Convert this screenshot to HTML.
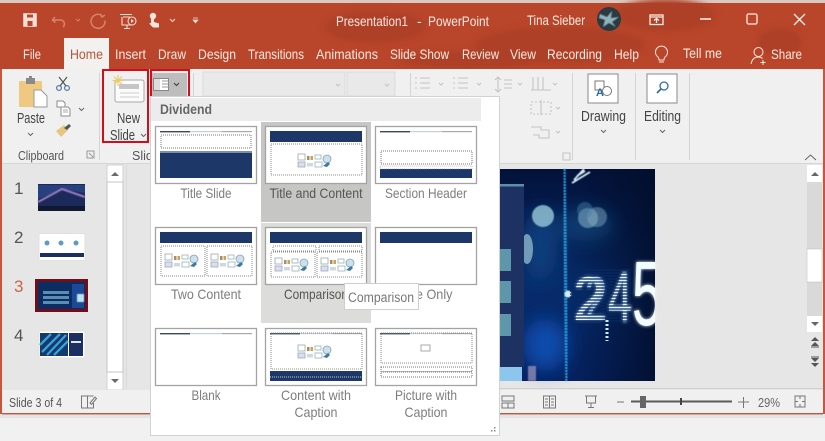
<!DOCTYPE html>
<html><head><meta charset="utf-8"><title>PowerPoint</title>
<style>
html,body{margin:0;padding:0;width:825px;height:441px;overflow:hidden;background:#f1f1f1}
svg.root{display:block;position:absolute;left:0;top:0;filter:blur(.3px)}
text{font-family:"Liberation Sans",sans-serif}
.t{fill:#fbe9e3;font-size:14px}
.r{fill:#444;font-size:14.5px}
.g{fill:#7d7d7d;font-size:14px;text-anchor:middle}
</style></head><body>
<svg class="root" width="825" height="441" viewBox="0 0 825 441" xmlns="http://www.w3.org/2000/svg">
<defs>
<filter id="b1"><feGaussianBlur stdDeviation="0.5"/></filter>
<filter id="b3" x="-30%" y="-60%" width="160%" height="220%"><feGaussianBlur stdDeviation="3"/></filter>
<filter id="b8" x="-80%" y="-80%" width="260%" height="260%"><feGaussianBlur stdDeviation="9"/></filter>
<filter id="gl" x="-30%" y="-30%" width="160%" height="160%"><feGaussianBlur stdDeviation="1.6" result="x"/><feMerge><feMergeNode in="x"/><feMergeNode in="SourceGraphic"/></feMerge></filter>
<linearGradient id="bg" x1="0" x2="0" y1="0" y2="1"><stop offset="0" stop-color="#03123a"/><stop offset=".55" stop-color="#062c6c"/><stop offset="1" stop-color="#052160"/></linearGradient>
<linearGradient id="rg" x1="0" x2="1" y1="0" y2="0"><stop offset="0" stop-color="#02102f" stop-opacity="0"/><stop offset="1" stop-color="#020d2a" stop-opacity=".85"/></linearGradient>
<symbol id="ci" viewBox="0 0 37 16" overflow="visible">
<rect x="0" y="1" width="7" height="6" fill="#fff" stroke="#9aa" stroke-width=".8"/>
<rect x="0" y="9" width="7" height="5" fill="#dde" stroke="#9ab" stroke-width=".8"/>
<rect x="9" y="3" width="2.5" height="4" fill="#a98d62"/><rect x="12.5" y="3" width="2.5" height="4" fill="#c9a15f"/>
<rect x="9" y="10" width="6" height="3.5" fill="#cfd8de"/>
<rect x="17" y="2" width="6" height="4" fill="#fff" stroke="#8aa" stroke-width=".7"/>
<rect x="17" y="9" width="7" height="5" fill="#fff" stroke="#8aa" stroke-width=".7"/>
<circle cx="29" cy="6" r="4" fill="#cfe0ea" stroke="#7fa3b8" stroke-width=".8"/>
<path d="M25 13 L30 9 L32 11 L29 14z" fill="#3b79a6"/>
</symbol>
<symbol id="top" viewBox="0 0 102 58" overflow="visible">
<rect x=".5" y=".5" width="101" height="57" fill="#fff" stroke="#a3a3a3" stroke-width="1.3"/>
<rect x="5" y="5" width="30" height="1.4" fill="#3c4a60"/>
<rect x="35" y="5" width="32" height="1.2" fill="#c5d0da"/>
<rect x="67" y="5" width="30" height="1.2" fill="#a9a9a9"/>
</symbol>
</defs>

<!-- title band -->
<rect x="0" y="0" width="825" height="3" fill="#d9c9c0"/>
<rect x="0" y="3" width="825" height="66" fill="#b9452a"/>
<g fill="#ad3f27" filter="url(#b3)">
<ellipse cx="375" cy="27" rx="50" ry="16"/>
<ellipse cx="560" cy="45" rx="85" ry="18"/>
<ellipse cx="665" cy="15" rx="50" ry="16"/>
<ellipse cx="780" cy="42" rx="22" ry="14"/>
<ellipse cx="470" cy="60" rx="70" ry="9"/>
</g>
<!-- qat -->
<g fill="none" stroke="#fbe9e3" stroke-width="1.5">
<rect x="24" y="14" width="12" height="12" fill="#f6dcd3"/>
<rect x="27" y="14.5" width="6" height="3" fill="#b9452a" stroke="none"/>
<rect x="27.5" y="21" width="5" height="5" fill="#b9452a" stroke="none"/>
</g>
<g fill="none" stroke="#d5826c" stroke-width="1.6">
<path d="M55 17 l-2.5 3 l3 2.5 M53 20 h8 a4 4 0 0 1 2 7"/>
<path d="M102 15.5 a7 7 0 1 0 3 5 M100 14 l2 3 l3 -2"/>
<path d="M76 19 l2 2 l2 -2" stroke-width="1"/>
</g>
<g fill="none" stroke="#f7dcd2" stroke-width="1.1">
<path d="M120 14.5 h12 M123 17 h7 M122 17 v8 h10 M127 25 v3 M124 28.5 h6"/>
<circle cx="132" cy="21" r="4" fill="#b9452a"/>
<path d="M131 19 l3 2 l-3 2z" fill="#f7dcd2" stroke="none"/>
</g>
<g fill="#f7e4dd">
<circle cx="153" cy="16" r="3.2"/>
<path d="M151 18 h3 v4 l5 1.5 v4 h-6 l-4 -4 l2 -0.5z"/>
</g>
<path d="M170 19 l2.5 2.5 l2.5 -2.5" fill="none" stroke="#f7dcd2" stroke-width="1.1"/>
<path d="M193 18 h5 M193 20 h5 l-2.5 3z" fill="#f7dcd2" stroke="#f7dcd2" stroke-width=".7"/>

<text class="t" x="336" y="26" textLength="72" lengthAdjust="spacingAndGlyphs">Presentation1</text>
<text class="t" x="417" y="26">-</text>
<text class="t" x="428" y="26" textLength="61" lengthAdjust="spacingAndGlyphs">PowerPoint</text>
<text class="t" x="527" y="25" textLength="58" lengthAdjust="spacingAndGlyphs">Tina Sieber</text>
<circle cx="609" cy="19" r="12" fill="#2b3a40"/>
<g filter="url(#b1)" fill="#8fb4bd"><path d="M600 14 l7 3 l5 -6 l-1 7 l8 -1 l-7 5 l4 5 l-7 -4 l-6 4 l2 -7 l-6 -2z"/></g>
<g fill="none" stroke="#fbe9e3" stroke-width="1.3">
<rect x="650" y="15" width="13" height="9.5"/>
<path d="M650 17 h13 M656.500 23 v-4 M654 20.500 l2.500 -2 l2.500 2"/>
<path d="M700 19 h11" stroke-width="1.6"/>
<rect x="747" y="14" width="10" height="10" rx="1.500"/>
<path d="M794 14 l11 11 M805 14 l-11 11" stroke-width="1.400"/>
</g>
<!-- tabs -->
<rect x="64" y="38" width="45" height="31" fill="#f2f1f0"/>
<g>
<text class="t" x="23" y="59" textLength="18" lengthAdjust="spacingAndGlyphs">File</text>
<text x="70" y="59" textLength="33" lengthAdjust="spacingAndGlyphs" fill="#b9533a" font-size="14">Home</text>
<text class="t" x="115" y="59" textLength="31" lengthAdjust="spacingAndGlyphs">Insert</text>
<text class="t" x="158" y="59" textLength="28" lengthAdjust="spacingAndGlyphs">Draw</text>
<text class="t" x="198" y="59" textLength="38" lengthAdjust="spacingAndGlyphs">Design</text>
<text class="t" x="248" y="59" textLength="56" lengthAdjust="spacingAndGlyphs">Transitions</text>
<text class="t" x="316" y="59" textLength="62" lengthAdjust="spacingAndGlyphs">Animations</text>
<text class="t" x="390" y="59" textLength="59" lengthAdjust="spacingAndGlyphs">Slide Show</text>
<text class="t" x="462" y="59" textLength="37" lengthAdjust="spacingAndGlyphs">Review</text>
<text class="t" x="510" y="59" textLength="26" lengthAdjust="spacingAndGlyphs">View</text>
<text class="t" x="547" y="59" textLength="55" lengthAdjust="spacingAndGlyphs">Recording</text>
<text class="t" x="614" y="59" textLength="25" lengthAdjust="spacingAndGlyphs">Help</text>
<text class="t" x="683" y="58" textLength="39" lengthAdjust="spacingAndGlyphs">Tell me</text>
<text class="t" x="771" y="59" textLength="31" lengthAdjust="spacingAndGlyphs">Share</text>
</g>
<g fill="none" stroke="#fbe9e3" stroke-width="1">
<path d="M665 57 a6 6 0 1 0 -7 0 c1 1 1 2 1 3 h5 c0 -1 0 -2 1 -3z M659 62 h5"/>
<circle cx="758.500" cy="52" r="4.500"/>
<path d="M751 64 c1 -5 4 -7 7.500 -7 c2 0 3 .5 4 1.500 M763 60 v5 M760.500 62.500 h5"/>
</g>

<!-- ribbon -->
<rect x="0" y="69" width="825" height="94" fill="#f0f0f0"/>
<rect x="0" y="69" width="2" height="345" fill="#c9563c"/>
<rect x="823" y="69" width="2" height="345" fill="#c9563c"/>
<g fill="#d4d4d4">
<rect x="99" y="73" width="1" height="87"/><rect x="193" y="73" width="1" height="24"/>
<rect x="410" y="73" width="1" height="24"/>
<rect x="572" y="73" width="1" height="87"/><rect x="635" y="73" width="1" height="87"/><rect x="689" y="73" width="1" height="87"/>
</g>
<!-- paste -->
<rect x="19" y="81" width="23" height="26" rx="1" fill="#efc981"/>
<rect x="26" y="78" width="9" height="6" fill="#8a8a8a"/><rect x="29" y="76" width="3" height="3" fill="#8a8a8a"/>
<path d="M34 90 h7 l6 6 v11 h-13z" fill="#fff" stroke="#9a9a9a"/>
<g fill="none" stroke="#5b7fa6" stroke-width="1.300"><circle cx="59" cy="88" r="2.400"/><circle cx="67" cy="88" r="2.400"/></g>
<path d="M60 86 L67 77 M66 86 L59 77" stroke="#555" stroke-width="1.200"/>
<path d="M57 101 h6 l2 2 v4 h-8z M61 107 h7 l2 2 v7 h-9z" fill="#fff" stroke="#8d8d8d"/>
<path d="M63 110 h5 M63 112 h5" stroke="#aaa"/>
<path d="M79 108 l2.500 2.500 l2.500 -2.500" fill="none" stroke="#666"/>
<path d="M56 131 l8 -6 l4 5 l-7 7z" fill="#e6c77d"/><path d="M64 128 l5 -4 l2 2 l-4 4z" fill="#555"/>
<text class="r" x="17" y="123" textLength="28" lengthAdjust="spacingAndGlyphs">Paste</text>
<path d="M28 133 l2.500 2.500 l2.500 -2.500" fill="none" stroke="#666"/>
<text x="18" y="160" font-size="12.500" fill="#555" textLength="46" lengthAdjust="spacingAndGlyphs">Clipboard</text>
<path d="M87 151 h7 v7 h-7z M89 153 l4 4" fill="none" stroke="#999"/>
<!-- new slide -->
<rect x="115" y="80" width="29" height="22" rx="2" fill="#fbfbfb" stroke="#a8a8a8"/>
<rect x="119" y="84" width="20" height="5" fill="#c6c6c6"/>
<path d="M120 93 h19 M120 97 h19" stroke="#cdcdcd"/>
<path d="M118 75 v11 M112.500 80.500 h11 M114 76.500 l8 8 M122 76.500 l-8 8" stroke="#efca6c" stroke-width="1.200"/>
<text class="r" x="117" y="123" textLength="23" lengthAdjust="spacingAndGlyphs">New</text>
<text class="r" x="110" y="140" textLength="25" lengthAdjust="spacingAndGlyphs">Slide</text>
<path d="M141 134 l2.500 2.500 l2.500 -2.500" fill="none" stroke="#666"/>
<rect x="103" y="70" width="45" height="72" fill="none" stroke="#d10f1c" stroke-width="2"/>
<text x="132" y="160" font-size="12.500" fill="#555">Slid</text>
<!-- layout button -->
<rect x="152" y="73" width="35" height="23" fill="#bdbdbd"/>
<rect x="153.500" y="78.500" width="15" height="12" fill="#fff" stroke="#888"/>
<rect x="154" y="79" width="6" height="11" fill="#ddd"/><path d="M162 81 h6 M162 84 h6 M162 87 h6" stroke="#999"/>
<path d="M174 83 l2.500 2.500 l2.500 -2.500" fill="none" stroke="#444" stroke-width="1.200"/>
<rect x="151" y="70" width="38" height="29" fill="none" stroke="#d10f1c" stroke-width="2"/>
<!-- disabled combos -->
<rect x="203" y="72" width="142" height="24" fill="#e9e9e9" stroke="#dcdcdc"/>
<rect x="347" y="72" width="48" height="24" fill="#e9e9e9" stroke="#dcdcdc"/>
<g fill="none" stroke="#c4c4c4" stroke-width="1.100">
<path d="M336 84 l2 2 l2 -2 M385 84 l2 2 l2 -2"/>
<path d="M420 78 h10 M420 83 h10 M420 88 h10 M415 78 h2 M415 83 h2 M415 88 h2 M439 83 l2 2 l2 -2"/>
<path d="M458 78 h10 M458 83 h10 M458 88 h10 M453 78 h2 M453 83 h2 M453 88 h2 M477 83 l2 2 l2 -2"/>
<path d="M498 78 v13 M495 80 l3 -3 l3 3 M495 89 l3 3 l3 -3 M504 80 h8 M504 84 h8 M504 88 h8 M518 83 l2 2 l2 -2"/>
<path d="M533 90 v-13 M538 90 v-13 M543 90 v-13 M531 90 h20 M553 83 l2 2 l2 -2"/>
<rect x="531" y="102" width="20" height="12" stroke-dasharray="2 2"/>
<path d="M541 100 v15 M556 107 l2 2 l2 -2"/>
<path d="M531 127 h10 v3 h8 v8 h-10 v-3 h-6 M556 131 l2 2 l2 -2"/>
<path d="M563 153 h7 v7 h-7z"/>
</g>
<!-- drawing / editing -->
<rect x="588" y="74" width="30" height="29" fill="#fff" stroke="#8a8a8a"/>
<rect x="595" y="81" width="9" height="9" fill="none" stroke="#777"/>
<circle cx="607" cy="91" r="4.500" fill="#fff" stroke="#777"/>
<text x="596" y="96" font-size="11" font-weight="bold" fill="#2c6ea5">A</text>
<text class="r" x="581" y="121" textLength="45" lengthAdjust="spacingAndGlyphs">Drawing</text>
<path d="M601 130 l2.500 2.500 l2.500 -2.500" fill="none" stroke="#666"/>
<rect x="647" y="74" width="30" height="29" fill="#fff" stroke="#8a8a8a"/>
<circle cx="664" cy="86" r="4" fill="none" stroke="#2f6f9f" stroke-width="1.300"/>
<path d="M661 89 l-4 4" stroke="#2f6f9f" stroke-width="1.800"/>
<text class="r" x="644" y="121" textLength="37" lengthAdjust="spacingAndGlyphs">Editing</text>
<path d="M660 130 l2.500 2.500 l2.500 -2.500" fill="none" stroke="#666"/>
<path d="M805 160 l5.500 -5 l5.500 5" fill="none" stroke="#666"/>

<!-- work area -->
<rect x="2" y="163" width="821" height="228" fill="#e6e6e6"/>
<rect x="2" y="163" width="821" height="1" fill="#d6d6d6"/>
<rect x="126" y="164" width="1" height="225" fill="#d8d8d8"/>
<!-- thumbnails -->
<g font-size="17" fill="#555">
<text x="14" y="194">1</text><text x="14" y="243">2</text><text x="14" y="292" fill="#c8654a">3</text><text x="14" y="341">4</text>
</g>
<rect x="38" y="184" width="47" height="27" fill="#1b2a5a"/>
<path d="M38 199 L62 189 L85 193 V185 H38z" fill="#27407e"/><path d="M38 202 L62 189 L85 197" stroke="#9a7cc0" fill="none" stroke-width="2" filter="url(#b1)"/>
<rect x="38" y="206" width="47" height="5" fill="#10192f"/>
<rect x="39" y="233.500" width="46" height="27" fill="#fff" stroke="#e0e0e0"/>
<g fill="#5d9dbd"><circle cx="47" cy="243" r="2.500"/><circle cx="61" cy="243" r="2.500"/><circle cx="76" cy="243" r="2.500"/></g>
<rect x="40" y="253" width="44" height="4" fill="#1c2f63"/>
<rect x="35" y="279" width="53" height="33" fill="#6e0f1d"/>
<rect x="38" y="282" width="47" height="27" fill="#0d2c62"/>
<g fill="#5a8eb0"><rect x="43" y="291" width="26" height="3"/><rect x="43" y="296" width="26" height="3"/><rect x="43" y="301" width="26" height="3"/></g>
<rect x="72" y="284" width="12" height="24" fill="#1a4a96"/><rect x="77" y="294" width="7" height="8" fill="#bde3f0" filter="url(#b1)"/>
<rect x="39" y="331" width="46" height="27" fill="#fff" stroke="#e0e0e0"/>
<rect x="40" y="333" width="28" height="23" fill="#123a6a"/>
<path d="M42 352 L60 334 M47 355 L66 335 M54 355 L68 341 M40 345 L51 334" stroke="#3a9fda" stroke-width="2.300"/>
<rect x="69" y="333" width="14" height="23" fill="#1c2f63"/><rect x="71" y="341" width="10" height="2" fill="#dfe6f0"/>
<!-- thumb scrollbar -->
<rect x="107" y="165" width="16" height="225" fill="#fff" stroke="#d0d0d0"/>
<rect x="107" y="182" width="16" height="190" fill="#fff" stroke="#c4c4c4"/>
<path d="M111 176 l4 -4 l4 4z M111 379 l4 4 l4 -4z" fill="#6a6a6a"/>

<!-- slide image -->
<rect x="499" y="169" width="156" height="212" fill="url(#bg)"/>
<rect x="570" y="169" width="85" height="212" fill="url(#rg)"/>
<g filter="url(#b8)">
<ellipse cx="545" cy="345" rx="22" ry="26" fill="#0b50b4" opacity=".9"/>
<ellipse cx="540" cy="245" rx="18" ry="35" fill="#0a4486" opacity=".8"/>
<ellipse cx="585" cy="225" rx="28" ry="16" fill="#164e86" opacity=".6"/>
</g>
<circle cx="543" cy="216" r="11" fill="#8fc0d4" opacity=".85" filter="url(#b1)"/>
<circle cx="588" cy="218" r="10" fill="#8fb5c9" opacity=".55" filter="url(#b1)"/>
<circle cx="597" cy="217" r="10" fill="#86aec4" opacity=".45" filter="url(#b1)"/>
<circle cx="585" cy="210" r="8" fill="#4a7fa6" opacity=".45" filter="url(#b1)"/>
<ellipse cx="527" cy="249" rx="6" ry="15" fill="#9ec7d4" opacity=".7"/>
<path d="M564 169 L567 381" stroke="#2c9fe0" stroke-width="3.500" stroke-dasharray="2 1" filter="url(#b1)"/>
<circle cx="568" cy="294" r="3.500" fill="#cfefff" filter="url(#b1)"/>
<path d="M572 183 L590 172 M577 176 L585 171 M574 180 L584 169" stroke="#d8eefa" stroke-width="1.800" filter="url(#b1)"/>
<!-- dark panel -->
<rect x="499" y="185" width="25" height="182" fill="#1d3263"/>
<rect x="499" y="184" width="25" height="2.500" fill="#5c8fa8"/>
<rect x="499" y="249" width="12" height="22" fill="#5f97aa"/>
<rect x="499" y="281" width="12" height="22" fill="#5f97aa"/>
<rect x="499" y="314" width="12" height="22" fill="#5f97aa"/>
<rect x="499" y="367" width="23" height="14" fill="#8cc6ef"/>
<rect x="528" y="366" width="8" height="15" fill="#a49ac0" opacity=".7" filter="url(#b1)"/>
<!-- digits -->
<g filter="url(#gl)">
<svg x="499" y="169" width="156" height="212" viewBox="499 169 156 212">
<text x="573" y="320" font-size="62" fill="#eaf8ff" textLength="32" lengthAdjust="spacingAndGlyphs">2</text>
<text x="585" y="320" font-size="62" fill="#cfeeff" opacity=".7" textLength="22" lengthAdjust="spacingAndGlyphs">2</text>
<text x="608" y="322" font-size="72" fill="#dff6ff" textLength="24" lengthAdjust="spacingAndGlyphs">4</text>
<text x="632" y="325" font-size="92" fill="#f2fcff" textLength="30" lengthAdjust="spacingAndGlyphs">5</text>
</svg>
</g>
<g stroke="#072a63" stroke-width="1.300">
<path d="M570 270 H631 M570 273 H631 M570 276 H631 M570 279 H631 M570 282 H631 M570 285 H631 M570 288 H631 M570 291 H631 M570 294 H631 M570 297 H631 M570 300 H631 M570 303 H631 M570 306 H631 M570 309 H631 M570 312 H631 M570 315 H631 M570 318 H631 M570 321 H631"/>
</g>
<path d="M607 320 V341" stroke="#cdeeff" stroke-width="3" stroke-dasharray="2 2"/>
<!-- right scrollbar -->
<rect x="807" y="165" width="15" height="167" fill="#d9d9d9"/>
<rect x="807" y="165" width="15" height="17" fill="#fff"/>
<rect x="807" y="249" width="15" height="33" fill="#fff" stroke="#c4c4c4" stroke-width=".6"/>
<rect x="807" y="316" width="15" height="16" fill="#fff"/>
<path d="M811 176 l4 -4 l4 4z M811 322 l4 4 l4 -4z" fill="#666"/>
<path d="M811 341 l4 -4 l4 4z M811 346 l4 -4 l4 4z M811 358 l4 4 l4 -4z M811 363 l4 4 l4 -4z" fill="#555"/>
<path d="M811 347 h8 M811 357 h8" stroke="#555"/>

<!-- status -->
<rect x="2" y="390" width="821" height="23" fill="#f0f0f0"/>
<rect x="499" y="388" width="324" height="1" fill="#cfcfcf"/>
<text x="9" y="407" font-size="12.500" fill="#555" textLength="53" lengthAdjust="spacingAndGlyphs">Slide 3 of 4</text>
<g fill="none" stroke="#777" stroke-width="1">
<path d="M81.500 396 h6 v12 h-6z M87.500 396 h6 M93.500 403 v5 h-6"/>
<path d="M90 403 l5 -6 l1.500 1.500 l-5 6z"/>
<rect x="502" y="396" width="12" height="5"/><rect x="502" y="403" width="6" height="5"/><rect x="508" y="403" width="6" height="5"/>
<path d="M543.500 396 h6 v12 h-6z M549.500 396 h6 v12 h-6z M545 399 h3 M545 402 h3 M545 405 h3 M551 399 h3 M551 402 h3 M551 405 h3"/>
<path d="M585 396 h12 M586.500 396 v7 h9 v-7 M591 403 v4 M588 407.500 h6"/>
<rect x="795" y="396" width="10" height="11"/><path d="M800 396 v3 M800 404 v3 M795 401.500 h3 M802 401.500 h3"/>
</g>
<path d="M617 402 h7 M738 402 h11 M743.500 397 v11" stroke="#777"/>
<rect x="631" y="400.500" width="101" height="2" fill="#5a5a5a"/>
<rect x="680" y="398" width="2" height="7" fill="#444"/>
<rect x="640" y="396" width="6" height="12" fill="#666"/>
<text x="758" y="407" font-size="12.500" fill="#666" textLength="22" lengthAdjust="spacingAndGlyphs">29%</text>
<rect x="2" y="413" width="821" height="1.500" fill="#bb5a42"/>
<rect x="0" y="415" width="825" height="3" fill="#dcdcdc" opacity=".6"/>

<!-- dropdown panel -->
<rect x="150.500" y="96.500" width="349" height="339" fill="#fff" stroke="#d2d2d2"/>
<rect x="151" y="98" width="330" height="23" fill="#ececec"/>
<text x="160" y="114" font-size="13.500" font-weight="bold" fill="#666" textLength="52" lengthAdjust="spacingAndGlyphs">Dividend</text>
<rect x="261" y="122" width="110" height="100" fill="#c6c6c5"/>
<rect x="261" y="223" width="110" height="100" fill="#dcdcda"/>

<!-- row1 -->
<use href="#top" x="155" y="126" width="102" height="58"/>
<rect x="161" y="135" width="90" height="13" fill="#fff" stroke="#777" stroke-dasharray="1 1"/>
<rect x="160" y="152" width="92" height="26" fill="#1c3768"/>
<rect x="160" y="151" width="92" height="2" fill="#7d8ea8"/>
<use href="#top" x="265" y="126" width="102" height="58"/>
<rect x="270" y="131" width="92" height="11" fill="#1c3768"/>
<rect x="271" y="144" width="91" height="31" fill="#fff" stroke="#888" stroke-dasharray="1 1"/>
<use href="#ci" x="298" y="153" width="37" height="16"/>
<use href="#top" x="375" y="126" width="102" height="58"/>
<rect x="381" y="151" width="91" height="13" fill="#fff" stroke="#777" stroke-dasharray="1 1"/>
<rect x="380" y="169" width="92" height="9" fill="#1c3768"/>
<rect x="380" y="166" width="92" height="3" fill="#fff" stroke="#888" stroke-dasharray="1 1" stroke-width=".5"/>
<text class="g" x="206" y="198" textLength="51" lengthAdjust="spacingAndGlyphs">Title Slide</text>
<text class="g" x="316" y="198" textLength="93" lengthAdjust="spacingAndGlyphs" style="fill:#555">Title and Content</text>
<text class="g" x="426" y="198" textLength="82" lengthAdjust="spacingAndGlyphs">Section Header</text>

<!-- row2 -->
<use href="#top" x="155" y="227" width="102" height="58"/>
<rect x="160" y="232" width="92" height="11" fill="#1c3768"/>
<rect x="161" y="246" width="44" height="30" fill="#fff" stroke="#888" stroke-dasharray="1 1"/>
<rect x="207" y="246" width="45" height="30" fill="#fff" stroke="#888" stroke-dasharray="1 1"/>
<use href="#ci" x="165" y="253" width="37" height="16"/>
<use href="#ci" x="211" y="253" width="37" height="16"/>
<use href="#top" x="265" y="227" width="102" height="58"/>
<rect x="270" y="232" width="92" height="11" fill="#1c3768"/>
<rect x="273" y="246" width="43" height="5" fill="#fff" stroke="#888" stroke-dasharray="1 1"/>
<rect x="319" y="246" width="43" height="5" fill="#fff" stroke="#888" stroke-dasharray="1 1"/>
<rect x="271" y="252" width="44" height="25" fill="#fff" stroke="#888" stroke-dasharray="1 1"/>
<rect x="317" y="252" width="45" height="25" fill="#fff" stroke="#888" stroke-dasharray="1 1"/>
<use href="#ci" x="275" y="257" width="37" height="16"/>
<use href="#ci" x="321" y="257" width="37" height="16"/>
<use href="#top" x="375" y="227" width="102" height="58"/>
<rect x="380" y="232" width="92" height="11" fill="#1c3768"/>
<text class="g" x="206" y="299" textLength="70" lengthAdjust="spacingAndGlyphs">Two Content</text>
<text class="g" x="316" y="299" textLength="64" lengthAdjust="spacingAndGlyphs" style="fill:#555">Comparison</text>
<text class="g" x="426" y="299" textLength="53" lengthAdjust="spacingAndGlyphs">Title Only</text>
<!-- tooltip -->
<rect x="344.500" y="283.500" width="74" height="26" fill="#fff" stroke="#cfcfcf"/>
<text x="348" y="302" font-size="13.500" fill="#777" textLength="66" lengthAdjust="spacingAndGlyphs">Comparison</text>

<!-- row3 -->
<use href="#top" x="155" y="328" width="102" height="58"/>
<use href="#top" x="265" y="328" width="102" height="58"/>
<rect x="271" y="333" width="91" height="36" fill="none" stroke="#888" stroke-dasharray="1 1"/>
<use href="#ci" x="298" y="344" width="37" height="16"/>
<rect x="270" y="371" width="92" height="10" fill="#1c3768"/>
<path d="M270 377 h92" stroke="#c8d2e0" stroke-dasharray="1 1"/>
<use href="#top" x="375" y="328" width="102" height="58"/>
<rect x="381" y="333" width="91" height="30" fill="none" stroke="#888" stroke-dasharray="1 1"/>
<rect x="421" y="345" width="9" height="6" fill="#fff" stroke="#aaa"/>
<rect x="381" y="367" width="91" height="4.500" fill="none" stroke="#777" stroke-dasharray="1 1"/>
<rect x="381" y="372" width="91" height="5" fill="none" stroke="#777" stroke-dasharray="1 1"/>
<text class="g" x="206" y="400" textLength="29" lengthAdjust="spacingAndGlyphs">Blank</text>
<text class="g" x="316" y="400" textLength="70" lengthAdjust="spacingAndGlyphs">Content with</text>
<text class="g" x="316" y="417" textLength="43" lengthAdjust="spacingAndGlyphs">Caption</text>
<text class="g" x="426" y="400" textLength="62" lengthAdjust="spacingAndGlyphs">Picture with</text>
<text class="g" x="426" y="417" textLength="43" lengthAdjust="spacingAndGlyphs">Caption</text>
<g fill="#888"><rect x="494" y="427" width="1.500" height="1.500"/><rect x="491" y="430" width="1.500" height="1.500"/><rect x="494" y="430" width="1.500" height="1.500"/></g>
</svg>
</body></html>
